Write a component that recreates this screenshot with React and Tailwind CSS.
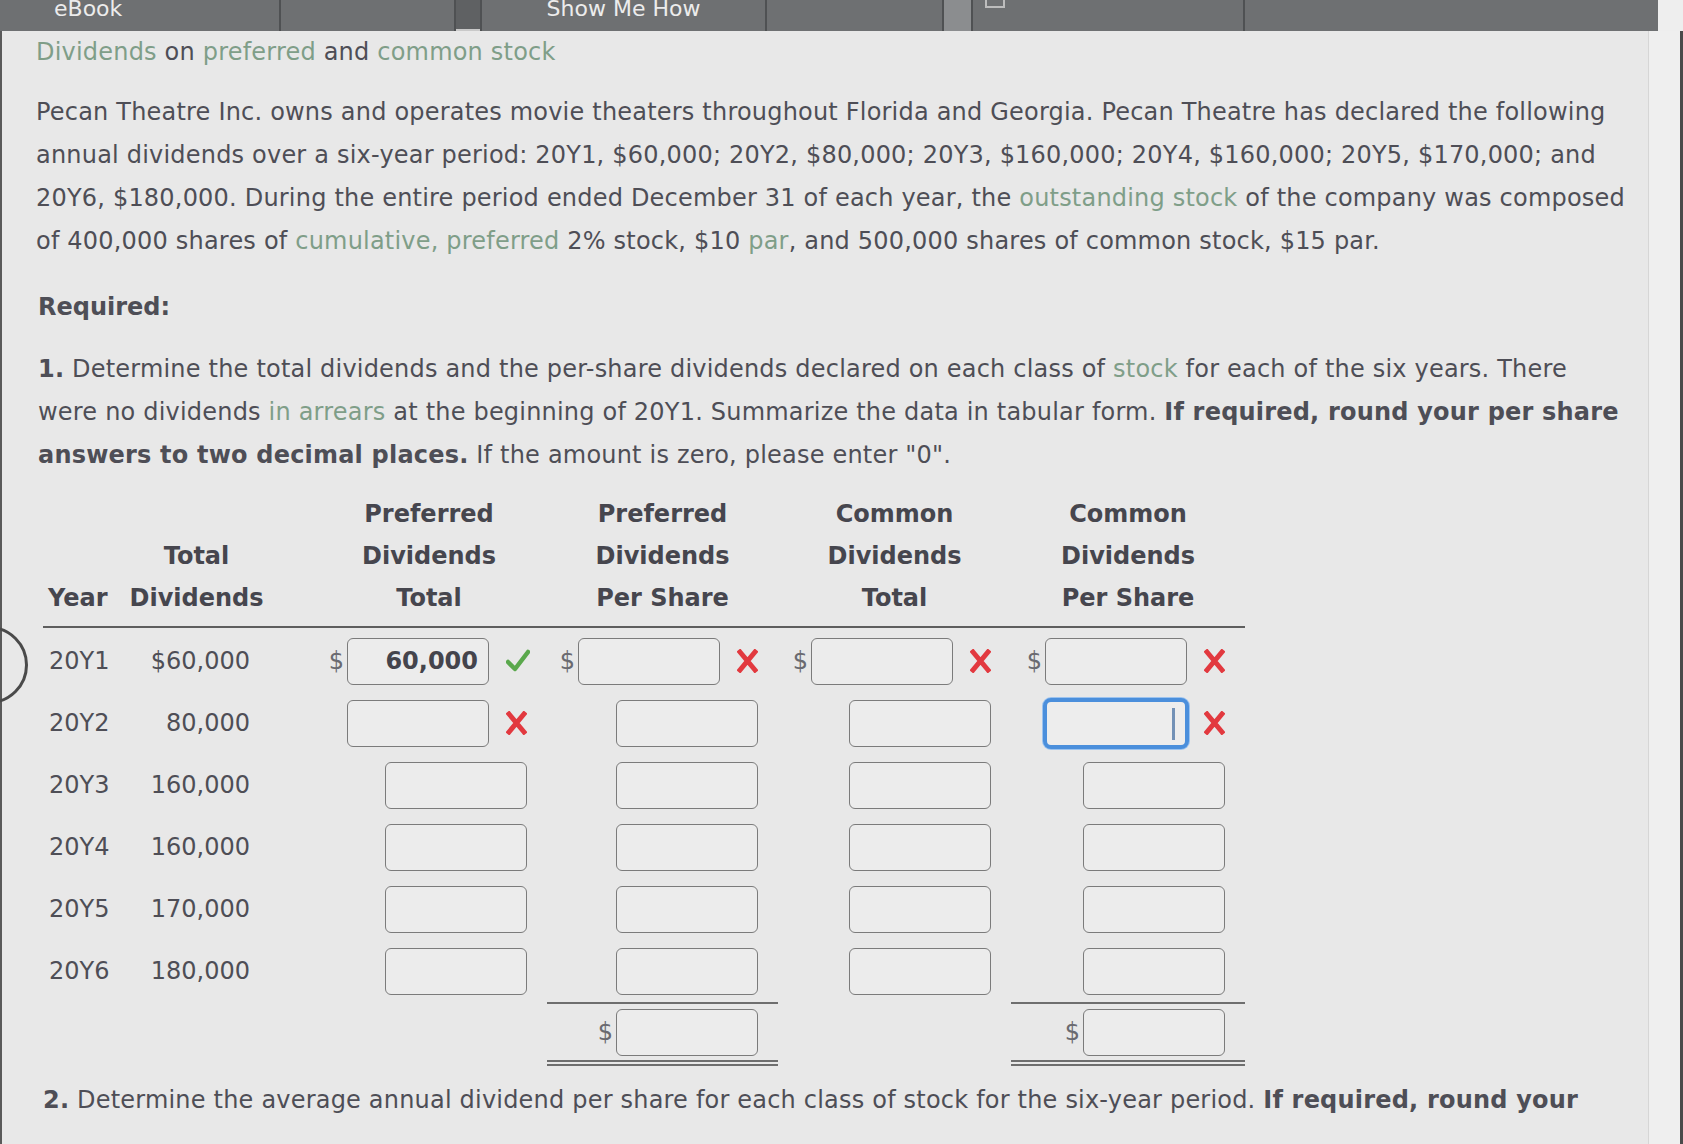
import React from 'react'

const G = 'text-[#7f9e88]'

function Check() {
    return (
        <svg width="24" height="24" viewBox="0 0 24 24">
            <path d="M2 13 L9 20 L22 3" fill="none" stroke="#5aa84c" strokeWidth="4.5" strokeLinecap="round" strokeLinejoin="round" />
        </svg>
    )
}

function Cross() {
    return (
        <svg width="21" height="24" viewBox="0 0 21 24">
            <path d="M3 3 L18 21 M18 3 L3 21" fill="none" stroke="#e2393f" strokeWidth="5" strokeLinecap="square" />
        </svg>
    )
}

function Box({ value, focused }) {
    if (focused) {
        return (
            <div className="relative w-[146px] h-[51px] -mr-[2px] rounded-[8px] border-[4px] border-[#4b8fdc] bg-[#ededed] shadow-[0_0_0_1px_#9cc3ef]">
                <div className="absolute right-[10px] top-[6px] w-[3px] h-[32px] bg-[#7391b6]"></div>
            </div>
        )
    }
    return (
        <div className="w-[142px] h-[47px] rounded-[6px] border-[1.5px] border-[#7b7b7b] bg-[#ececec] flex items-center justify-end pr-[10px] font-bold text-[#44444c]">
            {value}
        </div>
    )
}

function Cell({ dollar, icon, value, focused }) {
    return (
        <div className={"flex items-center justify-end " + (icon ? '' : 'pr-[20px]')}>
            {dollar && <span className="mr-[3px] text-[#6a6a70]">$</span>}
            <Box value={value} focused={focused} />
            {icon && (
                <div className="w-[58px] pl-[17px] flex items-center">
                    {icon === 'check' ? <Check /> : <Cross />}
                </div>
            )}
        </div>
    )
}

const years = [
    ['20Y1', '$60,000'],
    ['20Y2', '80,000'],
    ['20Y3', '160,000'],
    ['20Y4', '160,000'],
    ['20Y5', '170,000'],
    ['20Y6', '180,000'],
]

export default function App() {
    return (
        <div className="relative w-[1683px] h-[1144px] overflow-hidden bg-[#eeeeee] text-[24px] text-[#4e4e56]" style={{ fontFamily: '"DejaVu Sans", Verdana, sans-serif' }}>
            {/* top tab bar */}
            <div className="flex h-[31px] w-[1658px] bg-[#6e7072] text-[#ececec] text-[22px] overflow-hidden">
                <div className="w-[281px] border-r-2 border-[#4f5153] pl-[54px] leading-[18px]">eBook</div>
                <div className="w-[175px] border-r-2 border-[#4f5153]"></div>
                <div className="w-[24px] bg-[#5f6163] border-b-2 border-[#c9c9c9]"></div>
                <div className="w-[287px] border-l-2 border-r-2 border-[#4f5153] text-center leading-[18px]">Show Me How</div>
                <div className="w-[177px] border-r-2 border-[#4f5153]"></div>
                <div className="w-[27px] bg-[#8b8d8f]"></div>
                <div className="w-[274px] border-l-2 border-r-2 border-[#4f5153] pl-[12px]">
                    <div className="w-[20px] h-[8px] border-2 border-[#bdbdbd] border-t-0"></div>
                </div>
                <div className="flex-1"></div>
            </div>

            <div className="flex h-[1113px]">
                <div className="relative w-[1648px] bg-[#e8e8e8] border-l-2 border-[#5a5a5a] pl-[34px]">
                    {/* step indicator arc */}
                    <div className="absolute left-[-52px] top-[595px] w-[78px] h-[78px] rounded-full border-[3px] border-[#4a4a4a]"></div>

                    <div className="pt-[6px] leading-[30px] whitespace-nowrap tracking-[0.2px]">
                        <span className={G}>Dividends</span> on <span className={G}>preferred</span> and <span className={G}>common stock</span>
                    </div>

                    <p className="mt-[24px] leading-[43px] whitespace-nowrap tracking-[0.2px]">
                        Pecan Theatre Inc. owns and operates movie theaters throughout Florida and Georgia. Pecan Theatre has declared the following<br />
                        annual dividends over a six-year period: 20Y1, $60,000; 20Y2, $80,000; 20Y3, $160,000; 20Y4, $160,000; 20Y5, $170,000; and<br />
                        20Y6, $180,000. During the entire period ended December 31 of each year, the <span className={G}>outstanding stock</span> of the company was composed<br />
                        of 400,000 shares of <span className={G}>cumulative, preferred</span> 2% stock, $10 <span className={G}>par</span>, and 500,000 shares of common stock, $15 par.
                    </p>

                    <p className="mt-[23px] ml-[2px] leading-[43px] font-bold">Required:</p>

                    <p className="mt-[19px] ml-[2px] leading-[43px] whitespace-nowrap tracking-[0.2px]">
                        <b>1.</b> Determine the total dividends and the per-share dividends declared on each class of <span className={G}>stock</span> for each of the six years. There<br />
                        were no dividends <span className={G}>in arrears</span> at the beginning of 20Y1. Summarize the data in tabular form. <b>If required, round your per share<br />
                        answers to two decimal places.</b> If the amount is zero, please enter "0".
                    </p>

                    {/* table */}
                    <div className="mt-[16px] ml-[7px] w-[1202px] grid grid-cols-[86px_135px_47px_236px_231px_233px_234px]">
                        <div className="col-span-7 grid grid-cols-subgrid border-b-2 border-[#5e5e5e] pb-[7px] font-bold text-[#46464e] leading-[42px] items-end">
                            <div className="pl-[5px]">Year</div>
                            <div className="text-center">Total<br />Dividends</div>
                            <div></div>
                            <div className="text-center">Preferred<br />Dividends<br />Total</div>
                            <div className="text-center">Preferred<br />Dividends<br />Per Share</div>
                            <div className="text-center">Common<br />Dividends<br />Total</div>
                            <div className="text-center">Common<br />Dividends<br />Per Share</div>
                        </div>

                        {years.map(([y, total], i) => (
                            <div key={y} className={"col-span-7 grid grid-cols-subgrid h-[62px] items-center " + (i === 0 ? 'mt-[2px]' : '')}>
                                <div className="pl-[6px]">{y}</div>
                                <div className="text-right pr-[14px]">{total}</div>
                                <div></div>
                                {i === 0 && <Cell dollar icon="check" value="60,000" />}
                                {i === 0 && <Cell dollar icon="cross" />}
                                {i === 0 && <Cell dollar icon="cross" />}
                                {i === 0 && <Cell dollar icon="cross" />}
                                {i === 1 && <Cell icon="cross" />}
                                {i === 1 && <Cell />}
                                {i === 1 && <Cell />}
                                {i === 1 && <Cell icon="cross" focused />}
                                {i > 1 && <Cell />}
                                {i > 1 && <Cell />}
                                {i > 1 && <Cell />}
                                {i > 1 && <Cell />}
                            </div>
                        ))}

                        <div className="col-span-7 grid grid-cols-subgrid items-stretch">
                            <div></div>
                            <div></div>
                            <div></div>
                            <div></div>
                            <div className="h-[64px] border-t-2 border-b-[6px] border-double border-[#6e6e6e] flex items-center">
                                <div className="w-full"><Cell dollar /></div>
                            </div>
                            <div></div>
                            <div className="h-[64px] border-t-2 border-b-[6px] border-double border-[#6e6e6e] flex items-center">
                                <div className="w-full"><Cell dollar /></div>
                            </div>
                        </div>
                    </div>

                    <p className="mt-[13px] ml-[7px] leading-[43px] whitespace-nowrap tracking-[0.2px]">
                        <b>2.</b> Determine the average annual dividend per share for each class of stock for the six-year period. <b>If required, round your</b>
                    </p>
                </div>
                <div className="w-[32px] bg-[#efefef] border-l border-[#d6d6d6]"></div>
                <div className="w-[3px] bg-[#4a4a4a]"></div>
            </div>
        </div>
    )
}
